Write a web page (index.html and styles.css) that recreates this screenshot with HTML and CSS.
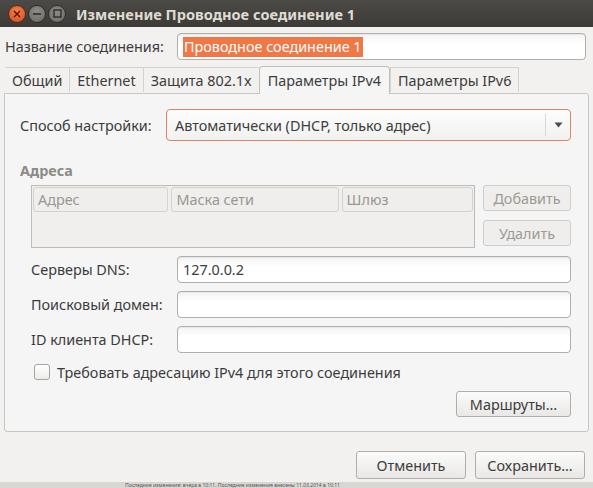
FILE: index.html
```html
<!DOCTYPE html>
<html lang="ru">
<head>
<meta charset="utf-8">
<title>Изменение Проводное соединение 1</title>
<link rel="stylesheet" href="styles.css">
</head>
<body>
<div class="window">
  <div class="titlebar">
    <div class="wbtns">
      <span class="wbtn close"><svg width="8" height="8" viewBox="0 0 8 8"><path d="M1 1L7 7M7 1L1 7" stroke="#5a1a08" stroke-width="1.5"/></svg></span>
      <span class="wbtn"><svg width="10" height="8" viewBox="0 0 10 8"><path d="M1 4H9" stroke="#2f2e2b" stroke-width="1.6"/></svg></span>
      <span class="wbtn"><svg width="9" height="9" viewBox="0 0 9 9"><rect x="1" y="1" width="7" height="7" fill="none" stroke="#2f2e2b" stroke-width="1.4"/></svg></span>
    </div>
    <div class="title">Изменение Проводное соединение 1</div>
  </div>

  <div class="namerow">
    <label class="namelabel">Название соединения:</label>
    <div class="entry nameentry"><span class="sel">Проводное соединение 1</span></div>
  </div>

  <div class="tabs">
    <div class="tab">Общий</div>
    <div class="tab">Ethernet</div>
    <div class="tab">Защита 802.1x</div>
    <div class="tab active">Параметры IPv4</div>
    <div class="tab">Параметры IPv6</div>
  </div>

  <div class="panel">
    <div class="methodrow">
      <span class="mlabel">Способ настройки:</span>
      <div class="combo">
        <span class="combotext">Автоматически (DHCP, только адрес)</span>
        <span class="combosep"></span>
        <span class="comboarrow"><svg width="9" height="6" viewBox="0 0 9 6"><path d="M0.5 0.5H8.5L4.5 5.5Z" fill="#4c4c4c"/></svg></span>
      </div>
    </div>

    <div class="section">Адреса</div>
    <div class="addrrow">
      <div class="table">
        <div class="thead">
          <div class="th c1">Адрес</div>
          <div class="th c2">Маска сети</div>
          <div class="th c3">Шлюз</div>
        </div>
      </div>
      <div class="addrbtns">
        <div class="btn disabled">Добавить</div>
        <div class="btn disabled">Удалить</div>
      </div>
    </div>

    <div class="fields">
      <div class="frow"><span class="flabel">Серверы DNS:</span><div class="entry">127.0.0.2</div></div>
      <div class="frow"><span class="flabel">Поисковый домен:</span><div class="entry"></div></div>
      <div class="frow"><span class="flabel">ID клиента DHCP:</span><div class="entry"></div></div>
    </div>

    <div class="checkrow"><span class="check"></span><span>Требовать адресацию IPv4 для этого соединения</span></div>

    <div class="routesrow"><div class="btn routes">Маршруты…</div></div>
  </div>

  <div class="footer">
    <div class="btn fbtn">Отменить</div>
    <div class="btn fbtn">Сохранить…</div>
  </div>
</div>
<div class="behind"><span>Последние изменения: вчера в 10:11. Последние изменения внесены 11.03.2014 в 10:11</span></div>
</body>
</html>
```

FILE: styles.css
```css
* { box-sizing: border-box; }
html, body { margin: 0; padding: 0; }
body {
  width: 593px; height: 488px; overflow: hidden;
  font-family: "Noto Sans", "DejaVu Sans", sans-serif;
  font-size: 14.4px; color: #3c3c3c;
  background: #4a4a48;
}
.window {
  height: 482px; background: #f2f1f0;
  display: flex; flex-direction: column;
}
.titlebar {
  height: 27px; flex: none;
  background: linear-gradient(#4b4a46, #3c3b37);
  display: flex; align-items: center;
}
.wbtns { display: flex; gap: 2px; padding-left: 8px; }
.wbtn {
  width: 18px; height: 18px; border-radius: 50%;
  background: radial-gradient(circle at 50% 35%, #8e8c86, #6a6863);
  border: 1px solid #2e2d2a;
  display: flex; align-items: center; justify-content: center;
}
.wbtn.close { background: radial-gradient(circle at 50% 35%, #f2804f, #d94b1e); border-color: #5a2a14; }
.title {
  margin-left: 10px; color: #dfdbd2; font-weight: bold; font-size: 14.6px;
}
.namerow {
  display: flex; align-items: center; margin-top: 6px; height: 27px;
  padding: 0 7px 0 5px;
}
.namelabel { width: 172px; flex: none; }
.entry {
  flex: 1; height: 27px; border: 1px solid #b3afa8; border-radius: 4px;
  background: linear-gradient(#f4f4f4, #ffffff 40%);
  display: flex; align-items: center; padding-left: 5px;
  box-shadow: inset 0 1px 1px rgba(0,0,0,0.06);
}
.sel { background: #f07746; color: #fff; padding: 0 1px; line-height: 20px; }
.tabs {
  display: flex; margin-top: 7px; padding-left: 5px; height: 26px; align-items: flex-end;
  position: relative; z-index: 1;
}
.tab {
  height: 25px; padding: 0 7px; display: flex; align-items: center;
  border-left: 1px solid #d6d3ce; border-top: 1px solid #d6d3ce; margin-bottom: 1px;
}
.tab:first-child { border-left: none; }
.tab:nth-child(5) { border-right: 1px solid #d6d3ce; }
.tab.active {
  height: 28px; margin-bottom: -1px; background: #f5f5f5;
  border: 1px solid #c3bfb9; border-bottom: none; border-radius: 4px 4px 0 0;
  padding: 0 8px;
}
.panel {
  margin: 0 4px; height: 339px; background: #f5f5f5;
  border: 1px solid #c9c6c1; border-radius: 0 3px 3px 3px;
  padding: 15px 17px 0 15px;
  display: flex; flex-direction: column;
}
.methodrow { display: flex; align-items: center; height: 32px; }
.mlabel { width: 146px; flex: none; }
.combo {
  flex: 1; height: 32px; border: 1px solid #e0835f; border-radius: 4px;
  background: linear-gradient(#fdfdfd, #f1f1f0);
  display: flex; align-items: center; padding-left: 8px;
}
.combotext { flex: 1; }
.combosep { width: 1px; height: 22px; background: #dad7d2; }
.comboarrow { width: 24px; display: flex; justify-content: center; }
.section { margin-top: 21px; font-weight: bold; color: #8d8984; height: 18px; line-height: 18px; }
.addrrow { display: flex; margin-top: 5px; padding-left: 11px; gap: 8px; }
.table {
  width: 444px; height: 63px; border: 1px solid #bfbcb7; background: #f0efee;
  padding: 1px;
}
.thead { display: flex; gap: 3px; }
.th {
  height: 25px; border: 1px solid #d5d2cd; border-radius: 3px; background: #efeeed;
  color: #9a9791; display: flex; align-items: center; padding-left: 4px;
}
.c1 { width: 136px; }
.c2 { width: 168px; }
.c3 { width: 132px; }
.addrbtns { display: flex; flex-direction: column; gap: 9px; }
.btn {
  height: 26px; border: 1px solid #b2aea7; border-radius: 3px;
  background: linear-gradient(#fbfbfb, #e9e8e6);
  display: flex; align-items: center; justify-content: center;
}
.btn.disabled {
  width: 88px; color: #9d9a94; border-color: #d0cdc8; background: #efeeed;
}
.fields { display: flex; flex-direction: column; gap: 8px; margin-top: 8px; padding-left: 11px; }
.frow { display: flex; align-items: center; }
.flabel { width: 146px; flex: none; }
.checkrow { display: flex; align-items: center; margin-top: 11px; padding-left: 14px; height: 16px; }
.check {
  width: 16px; height: 16px; border: 1px solid #a8a49e; border-radius: 3px;
  background: linear-gradient(#ffffff, #ececeb); margin-right: 7px;
}
.routesrow { display: flex; justify-content: flex-end; margin-top: 11px; }
.routes { width: 115px; }
.footer {
  display: flex; justify-content: flex-end; gap: 9px; padding-right: 8px; margin-top: 19px;
}
.fbtn { width: 110px; height: 28px; }
.behind {
  height: 6px; background: #d9d7d3; overflow: hidden; padding-left: 125px;
  font-size: 5px; line-height: 6px; color: #555; white-space: nowrap;
}
```
